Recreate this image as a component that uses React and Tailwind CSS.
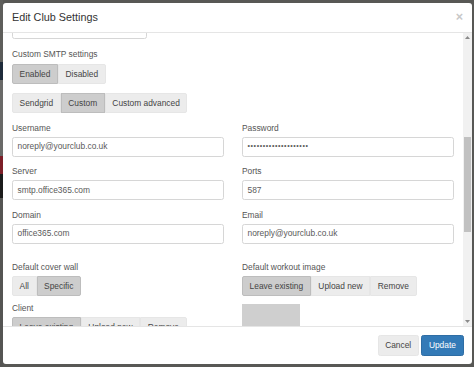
import React from "react"

// Button inside a Bootstrap-like button group
const GroupButton = ({ label, active, first, last }) => (
  <div
    className={`h-[20px] px-[6.6px] flex items-center border text-[8.4px] leading-[12px] text-[#444] whitespace-nowrap ${
      active ? "bg-[#cdcdcd] border-[#bdbdbd]" : "bg-[#ececec] border-[#e6e6e6]"
    } ${first ? "rounded-l-[2px]" : ""} ${last ? "rounded-r-[2px]" : ""}`}
  >
    {label}
  </div>
)

const ButtonGroup = ({ items, active }) => (
  <div className="flex">
    {items.map((item, i) => (
      <GroupButton
        key={item}
        label={item}
        active={item === active}
        first={i === 0}
        last={i === items.length - 1}
      />
    ))}
  </div>
)

const Label = ({ children, className = "" }) => (
  <div className={`text-[8.4px] leading-[12px] text-[#555] ${className}`}>{children}</div>
)

const Input = ({ value, password }) => (
  <div className="h-[20px] border border-[#d6d6d6] rounded-[2.4px] pl-[4.5px] flex items-center text-[8.4px] text-[#5a5a5a] whitespace-nowrap overflow-hidden">
    {password ? <span className="text-[7px] tracking-[0.6px]">{value}</span> : value}
  </div>
)

const Field = ({ label, value, password }) => (
  <div className="mt-[8.5px]">
    <Label className="mb-[3px]">{label}</Label>
    <Input value={value} password={password} />
  </div>
)

const Arrow = ({ down }) => (
  <div className="h-[9px] flex items-center justify-center">
    <svg width="5" height="3" viewBox="0 0 5 3">
      <path d={down ? "M0 0 L5 0 L2.5 3 Z" : "M0 3 L5 3 L2.5 0 Z"} fill="#8a8a8a" />
    </svg>
  </div>
)

export default function App() {
  return (
    <div className="w-[474px] h-[367px] flex bg-[#585855] overflow-hidden font-['Liberation_Sans',Arial,sans-serif]">
      {/* backdrop strip on the left */}
      <div className="w-[3px] flex flex-col">
        <div className="h-[62px] bg-[#5e5e5b]" />
        <div className="h-[18px] bg-[#1f2b3b]" />
        <div className="h-[76px] bg-[#6a6a68]" />
        <div className="h-[18px] bg-[#7c1f28]" />
        <div className="h-[24px] bg-[#1b1b1b]" />
        <div className="flex-1 bg-[#555553]" />
      </div>

      <div className="pt-[3px]">
        <div className="w-[469px] h-[361px] bg-white rounded-[3px] flex flex-col overflow-hidden">
          {/* Header */}
          <div className="h-[30px] shrink-0 border-b border-[#e5e5e5] flex items-center justify-between pl-[9px] pr-[9px]">
            <div className="text-[10.8px] text-[#333] leading-none">Edit Club Settings</div>
            <div className="text-[12.6px] font-bold text-[#c8c8c8] leading-none">×</div>
          </div>

          {/* Body */}
          <div className="h-[293px] shrink-0 flex overflow-hidden">
            <div className="flex-1 px-[9px] overflow-hidden">
              <div className="w-[135px] -mt-[14px] h-[20px] border border-[#d6d6d6] rounded-[2.4px]" />

              <Label className="mt-[9px] mb-[4px]">Custom SMTP settings</Label>
              <ButtonGroup items={["Enabled", "Disabled"]} active="Enabled" />

              <div className="mt-[9px]">
                <ButtonGroup items={["Sendgrid", "Custom", "Custom advanced"]} active="Custom" />
              </div>

              <div className="grid grid-cols-2 gap-x-[18px]">
                <div>
                  <Field label="Username" value="noreply@yourclub.co.uk" />
                  <Field label="Server" value="smtp.office365.com" />
                  <Field label="Domain" value="office365.com" />
                </div>
                <div>
                  <Field label="Password" value="••••••••••••••••••••" password />
                  <Field label="Ports" value="587" />
                  <Field label="Email" value="noreply@yourclub.co.uk" />
                </div>
              </div>

              <div className="grid grid-cols-2 gap-x-[18px] mt-[17px]">
                <div>
                  <Label className="mb-[3.2px]">Default cover wall</Label>
                  <ButtonGroup items={["All", "Specific"]} active="Specific" />
                  <Label className="mt-[6px] mb-[3px]">Client</Label>
                  <ButtonGroup items={["Leave existing", "Upload new", "Remove"]} active="Leave existing" />
                </div>
                <div>
                  <Label className="mb-[3.2px]">Default workout image</Label>
                  <ButtonGroup items={["Leave existing", "Upload new", "Remove"]} active="Leave existing" />
                  <div className="mt-[8.6px] w-[58px] h-[30px] bg-[#cfcfcf]" />
                </div>
              </div>
            </div>

            {/* Scrollbar */}
            <div className="w-[9px] bg-[#f1f1f1] flex flex-col">
              <Arrow />
              <div className="h-[95px]" />
              <div className="h-[95px] mx-[1px] bg-[#c1c1c1]" />
              <div className="flex-1" />
              <Arrow down />
            </div>
          </div>

          {/* Footer */}
          <div className="flex-1 border-t border-[#e5e5e5] flex items-center justify-end gap-[2.5px] pr-[8.5px]">
            <div className="h-[21px] px-[6.6px] flex items-center bg-[#ececec] border border-[#e6e6e6] rounded-[2.4px] text-[8.4px] text-[#444]">
              Cancel
            </div>
            <div className="h-[21px] px-[6.6px] flex items-center bg-[#337ab7] border border-[#2e6da4] rounded-[2.4px] text-[8.4px] text-white">
              Update
            </div>
          </div>
        </div>
      </div>

      <div className="flex-1" />
    </div>
  )
}
